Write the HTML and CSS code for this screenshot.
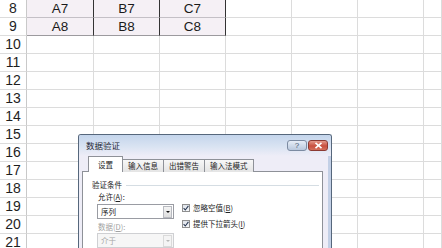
FILE: index.html
```html
<!DOCTYPE html>
<html>
<head>
	<title>数据验证</title>
	<link rel="stylesheet" href="styles.css">
</head>
<body>
	<div class="sheet">
		<div class="row">
			<div class="rh">8</div>
			<div class="cell data">A7</div><div class="cell data">B7</div><div class="cell data">C7</div>
			<div class="cell"></div><div class="cell"></div><div class="cell"></div><div class="cell"></div>
		</div>
		<div class="row">
			<div class="rh">9</div>
			<div class="cell data last">A8</div><div class="cell data last">B8</div><div class="cell data last">C8</div>
			<div class="cell"></div><div class="cell"></div><div class="cell"></div><div class="cell"></div>
		</div>
		<div class="row"><div class="rh">10</div><div class="cell"></div><div class="cell"></div><div class="cell"></div><div class="cell"></div><div class="cell"></div><div class="cell"></div><div class="cell"></div></div>
		<div class="row"><div class="rh">11</div><div class="cell"></div><div class="cell"></div><div class="cell"></div><div class="cell"></div><div class="cell"></div><div class="cell"></div><div class="cell"></div></div>
		<div class="row"><div class="rh">12</div><div class="cell"></div><div class="cell"></div><div class="cell"></div><div class="cell"></div><div class="cell"></div><div class="cell"></div><div class="cell"></div></div>
		<div class="row"><div class="rh">13</div><div class="cell"></div><div class="cell"></div><div class="cell"></div><div class="cell"></div><div class="cell"></div><div class="cell"></div><div class="cell"></div></div>
		<div class="row"><div class="rh">14</div><div class="cell"></div><div class="cell"></div><div class="cell"></div><div class="cell"></div><div class="cell"></div><div class="cell"></div><div class="cell"></div></div>
		<div class="row"><div class="rh">15</div><div class="cell"></div><div class="cell"></div><div class="cell"></div><div class="cell"></div><div class="cell"></div><div class="cell"></div><div class="cell"></div></div>
		<div class="row"><div class="rh">16</div><div class="cell"></div><div class="cell"></div><div class="cell"></div><div class="cell"></div><div class="cell"></div><div class="cell"></div><div class="cell"></div></div>
		<div class="row"><div class="rh">17</div><div class="cell"></div><div class="cell"></div><div class="cell"></div><div class="cell"></div><div class="cell"></div><div class="cell"></div><div class="cell"></div></div>
		<div class="row"><div class="rh">18</div><div class="cell"></div><div class="cell"></div><div class="cell"></div><div class="cell"></div><div class="cell"></div><div class="cell"></div><div class="cell"></div></div>
		<div class="row"><div class="rh">19</div><div class="cell"></div><div class="cell"></div><div class="cell"></div><div class="cell"></div><div class="cell"></div><div class="cell"></div><div class="cell"></div></div>
		<div class="row"><div class="rh">20</div><div class="cell"></div><div class="cell"></div><div class="cell"></div><div class="cell"></div><div class="cell"></div><div class="cell"></div><div class="cell"></div></div>
		<div class="row"><div class="rh">21</div><div class="cell"></div><div class="cell"></div><div class="cell"></div><div class="cell"></div><div class="cell"></div><div class="cell"></div><div class="cell"></div></div>
	</div>

	<!-- dialog floats over the sheet -->
	<div class="dialog">
		<div class="titlebar">
			<span class="title">数据验证</span>
			<div class="tbtns">
				<span class="tbtn help">?</span>
				<span class="tbtn close">
					<svg width="9" height="7" viewBox="0 0 9 7"><path d="M1.5 0.8 L7.5 6.2 M7.5 0.8 L1.5 6.2" stroke="#fff" stroke-width="1.6" fill="none"/></svg>
				</span>
			</div>
		</div>
		<div class="dlg-body">
			<div class="tabs">
				<span class="tab on">设置</span>
				<span class="tab">输入信息</span>
				<span class="tab">出错警告</span>
				<span class="tab">输入法模式</span>
			</div>
			<div class="panel">
				<div class="group"><span>验证条件</span><i class="rule"></i></div>
				<div class="form">
					<div class="col-left">
						<div class="lbl">允许(<u>A</u>):</div>
						<div class="combo"><span>序列</span><b class="arrow"></b></div>
						<div class="lbl off">数据(<u>D</u>):</div>
						<div class="combo off"><span>介于</span><b class="arrow"></b></div>
					</div>
					<div class="col-right">
						<div class="chk first"><i class="box"><svg width="6" height="6" viewBox="0 0 6 6"><path d="M0.6 3.2 L2.3 5 L5.4 0.8" stroke="#2b3a55" stroke-width="1.1" fill="none"/></svg></i>忽略空值(<u>B</u>)</div>
						<div class="chk"><i class="box"><svg width="6" height="6" viewBox="0 0 6 6"><path d="M0.6 3.2 L2.3 5 L5.4 0.8" stroke="#2b3a55" stroke-width="1.1" fill="none"/></svg></i>提供下拉箭头(<u>I</u>)</div>
					</div>
				</div>
			</div>
		</div>
	</div>
</body>
</html>
```

FILE: styles.css
```css
body{
	margin: 0;
	background: #fff;
	font-family: "Liberation Sans", Arial, sans-serif;
	overflow: hidden;
}
.sheet{
	display: flex;
	flex-direction: column;
}
.row{
	display: flex;
	height: 18px;
}
.rh{
	width: 27px;
	flex: none;
	box-sizing: border-box;
	border-right: 1px solid #c9c9c9;
	border-bottom: 1px solid #dcdcdc;
	font-size: 14px;
	line-height: 17px;
	text-align: center;
	color: #1e1e1e;
}
.cell{
	width: 66px;
	flex: none;
	box-sizing: border-box;
	border-right: 1px solid #dcdcdc;
	border-bottom: 1px solid #dcdcdc;
	font-size: 13.5px;
	line-height: 17px;
	text-align: center;
	color: #1a1a1a;
}
.row .cell:nth-child(2){
	width: 67px;
}
.row .cell:last-child{
	flex: 1;
	width: auto;
}
.cell.data{
	background-color: #f5f0f5;
	border-right: 1px solid #333;
	border-bottom: 1px solid #c4c0c6;
}
.cell.data.last{
	border-bottom: 1px solid #9c9a9e;
}

/* dialog */
.dialog{
	position: absolute;
	left: 78px;
	top: 134px;
	width: 254px;
	height: 114px;
	overflow: hidden;
	box-sizing: border-box;
	border: 1px solid #56677c;
	border-bottom: none;
	border-radius: 3px 3px 0 0;
	background: #eeedf7;
	box-shadow: inset -3px 0 0 #c3d0e6;
	font-family: "Noto Sans CJK SC", "Liberation Sans", sans-serif;
}
.titlebar{
	height: 21px;
	display: flex;
	align-items: flex-start;
	justify-content: space-between;
	background: linear-gradient(#c4d5ec, #d9e3f2 55%, #eeedf7);
}
.title{
	margin: 5px 0 0 7px;
	font-size: 8.5px;
	line-height: 11px;
	color: #1e2633;
}
.tbtns{
	display: flex;
	margin: 5px 3px 0 0;
	gap: 1px;
}
.tbtn{
	width: 20px;
	height: 11px;
	box-sizing: border-box;
	border-radius: 3px;
	display: flex;
	align-items: center;
	justify-content: center;
}
.help{
	border: 1px solid #7c8ba2;
	background: linear-gradient(#e6edf7, #b9c8dd);
	font-family: "Liberation Sans", sans-serif;
	font-size: 8px;
	color: #48576e;
}
.close{
	border: 1px solid #8c3a33;
	background: linear-gradient(#e59a8c, #c8503f 55%, #d4705c);
}
.dlg-body{
	padding: 0 8px 0 3px;
}
.tabs{
	display: flex;
	align-items: flex-end;
	padding-left: 6px;
	height: 15px;
	margin-top: 1px;
	position: relative;
	z-index: 1;
}
.tab{
	height: 13px;
	box-sizing: border-box;
	padding: 0 5px;
	border: 1px solid #8e9198;
	border-bottom: none;
	margin-left: -1px;
	background: linear-gradient(#f7f7f7, #e4e4e4);
	font-size: 7.5px;
	line-height: 12px;
	color: #222;
}
.tab.on{
	height: 16px;
	width: 35px;
	margin-left: 0;
	background: #fff;
	text-align: center;
	line-height: 15px;
}
.panel{
	background: #fff;
	border: 1px solid #8e9198;
	height: 120px;
	margin-top: -1px;
}
.group{
	display: flex;
	align-items: center;
	padding: 8px 3px 0 9px;
	height: 10px;
	font-size: 7.5px;
	line-height: 10px;
	color: #222;
}
.rule{
	flex: 1;
	border-top: 1px solid #d5dde3;
	margin-left: 4px;
}
.form{
	display: flex;
	padding-left: 14px;
}
.col-left{
	width: 77px;
}
.lbl{
	margin-top: 2px;
	padding-left: 1px;
	font-size: 7.5px;
	line-height: 10px;
	color: #222;
}
.lbl.off{
	margin-top: 3px;
	color: #a2a2a2;
}
.lbl u, .chk u{
	text-decoration: underline;
}
.combo{
	margin-top: 2px;
	height: 15px;
	box-sizing: border-box;
	border: 1px solid #9a9ca3;
	display: flex;
	align-items: center;
	justify-content: space-between;
	padding-left: 3px;
	font-size: 7.5px;
	color: #222;
}
.combo.off{
	margin-top: 1px;
	border-color: #cfd0d3;
	background: #f6f6f6;
	color: #a5a5a5;
}
.arrow{
	width: 9px;
	height: 12px;
	margin-right: 1px;
	box-sizing: border-box;
	border: 1px solid #b8bac0;
	background: linear-gradient(#f4f4f4, #dedede);
	position: relative;
}
.arrow::after{
	content: "";
	position: absolute;
	left: 2px;
	top: 4px;
	border-left: 2px solid transparent;
	border-right: 2px solid transparent;
	border-top: 2px solid #111;
}
.combo.off .arrow{
	border-color: #dadada;
	background: #f4f4f4;
}
.combo.off .arrow::after{
	border-top-color: #b8b8b8;
}
.col-right{
	padding-left: 8px;
}
.chk{
	display: flex;
	align-items: center;
	margin-top: 6px;
	font-size: 7.5px;
	line-height: 10px;
	color: #222;
}
.chk.first{
	margin-top: 13px;
}
.box{
	width: 8px;
	height: 8px;
	box-sizing: border-box;
	border: 1px solid #8f8f8f;
	background: linear-gradient(#dfe3ea, #f6f7f9);
	margin-right: 3px;
	display: flex;
	align-items: center;
	justify-content: center;
}
```
